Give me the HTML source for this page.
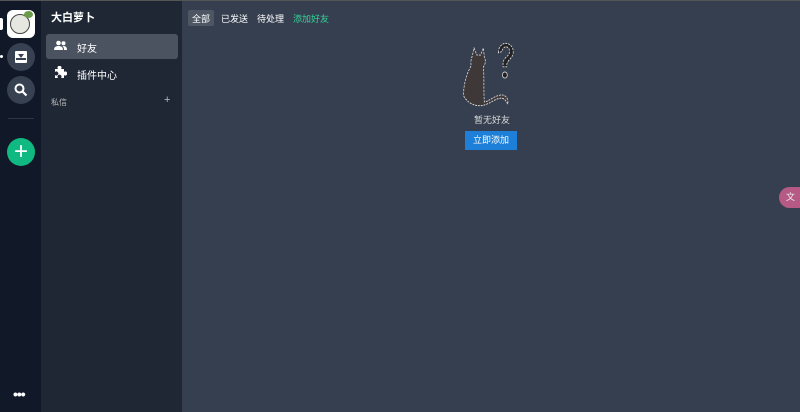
<!DOCTYPE html>
<html><head><meta charset="utf-8"><style>
*{margin:0;padding:0;box-sizing:border-box}
body{width:800px;height:412px;overflow:hidden;background:#363f4f;font-family:"Liberation Sans","Noto Sans CJK SC",sans-serif;position:relative;color:#fff}
.rail{position:absolute;left:0;top:0;width:41px;height:412px;background:#111827}
.side{position:absolute;left:41px;top:0;width:141px;height:412px;background:#1f2735}
.circ{position:absolute;width:28px;height:28px;border-radius:50%;background:#374151;left:7px}
.top{position:absolute;left:0;top:0;width:800px;height:1px;background:#555}
</style></head><body>
<div class="rail">
  <div style="position:absolute;left:7px;top:10px;width:28px;height:28px;border-radius:6px;background:#fff"></div>
  <div style="position:absolute;left:10px;top:14px;width:20px;height:20px;border-radius:50%;background:#e5e7e0;border:1.5px solid #444"></div>
  <div style="position:absolute;left:24px;top:11px;width:9px;height:7px;border-radius:50%;background:#6a9a4a"></div>
  <div style="position:absolute;left:0;top:18px;width:3px;height:12px;background:#fff;border-radius:0 2px 2px 0"></div>
  <div style="position:absolute;left:0;top:55px;width:3px;height:3px;background:#fff;border-radius:50%"></div>
  <div class="circ" style="top:43px"><svg width="28" height="28" viewBox="0 0 28 28"><rect x="8" y="8" width="12" height="12" rx="1" fill="#fff"/><path d="M11 11h6l-3 4z" fill="#374151"/><rect x="9" y="15" width="10" height="2" fill="#374151"/></svg></div>
  <div class="circ" style="top:76px"><svg width="28" height="28" viewBox="0 0 28 28"><circle cx="12.5" cy="12.5" r="4" stroke="#fff" stroke-width="2" fill="none"/><path d="M15.5 15.5l4 4" stroke="#fff" stroke-width="2.2"/></svg></div>
  <div style="position:absolute;left:8px;top:118px;width:26px;height:1px;background:#2d3545"></div>
  <div style="position:absolute;left:7px;top:138px;width:28px;height:28px;border-radius:50%;background:#10b981;text-align:center;line-height:27px;font-size:24px">+</div>
  <div style="position:absolute;left:13px;top:386px;font-size:14px;letter-spacing:-1px;font-weight:bold">•••</div>
</div>
<div class="side">
  <div style="position:absolute;left:10px;top:9px;font-size:11px;font-weight:bold">大白萝卜</div>
  <div style="position:absolute;left:5px;top:34px;width:132px;height:25px;background:#4b5260;border-radius:3px"></div>
  <svg style="position:absolute;left:13px;top:40px" width="13" height="12" viewBox="0 0 13 12"><circle cx="4.5" cy="3" r="2.3" fill="#fff"/><path d="M0 10c0-3 2-4 4.5-4s4.5 1 4.5 4z" fill="#fff"/><circle cx="9.5" cy="3.3" r="2" fill="#fff"/><path d="M9.5 6c2 0 3.5 1 3.5 4h-3c0-2-.5-3-1.5-3.7z" fill="#fff"/></svg>
  <div style="position:absolute;left:36px;top:40px;font-size:10px">好友</div>
  <svg style="position:absolute;left:13px;top:66px" width="13" height="13" viewBox="0 0 13 13"><path d="M1 3h3a2 2 0 1 1 3 0h3v3a2 2 0 1 1 0 3v3H7a2 2 0 1 0-3 0H1V9a2 2 0 1 0 0-3z" fill="#fff"/></svg>
  <div style="position:absolute;left:36px;top:67px;font-size:10px">插件中心</div>
  <div style="position:absolute;left:10px;top:97px;font-size:8px;color:#bbb">私信</div>
  <div style="position:absolute;left:123px;top:94px;font-size:11px;color:#bbb">+</div>
</div>
<div style="position:absolute;left:188px;top:10px;width:26px;height:16px;background:#4e5664;border-radius:2px"></div>
<div style="position:absolute;left:192px;top:12px;font-size:9px">全部</div>
<div style="position:absolute;left:221px;top:12px;font-size:9px">已发送</div>
<div style="position:absolute;left:257px;top:12px;font-size:9px">待处理</div>
<div style="position:absolute;left:293px;top:12px;font-size:9px;color:#34d399">添加好友</div>
<svg style="position:absolute;left:461px;top:41px" width="56" height="68" viewBox="0 2 60 58" preserveAspectRatio="none">
  <path d="M14 8l3 6h4l3-6 1 8c2 3 1 6-1 8 1 10 0 18 1 30 4 0 10-5 18-6 6 0 8 4 7 8-2-4-5-6-9-5-6 1-11 5-18 6-8 1-16-2-20-8-1-6 2-18 8-26-1-3 0-6 1-8z" fill="#3f3838" stroke="#ddd" stroke-width="0.8" stroke-dasharray="2 1"/>
  <path d="M40 12c0-5 4-8 8-8s8 3 8 7c0 5-4 6-6 9-1 1-1 3-1 4h-4c0-3 0-5 2-7s5-3 5-6-2-4-4-4-4 2-4 4z" fill="#222" stroke="#ddd" stroke-width="0.8" stroke-dasharray="2 1"/>
  <circle cx="47" cy="31" r="2.6" fill="#222" stroke="#ddd" stroke-width="0.8"/>
</svg>
<div style="position:absolute;left:474px;top:113px;font-size:9px;color:#ddd">暂无好友</div>
<div style="position:absolute;left:465px;top:131px;width:52px;height:19px;background:#1e7fd8;font-size:9px;text-align:center;line-height:19px">立即添加</div>
<div style="position:absolute;left:779px;top:187px;width:30px;height:21px;border-radius:11px;background:#b65a85;font-size:9px;line-height:21px;padding-left:7px;color:#eee">文</div>
<div class="top"></div>
</body></html>
